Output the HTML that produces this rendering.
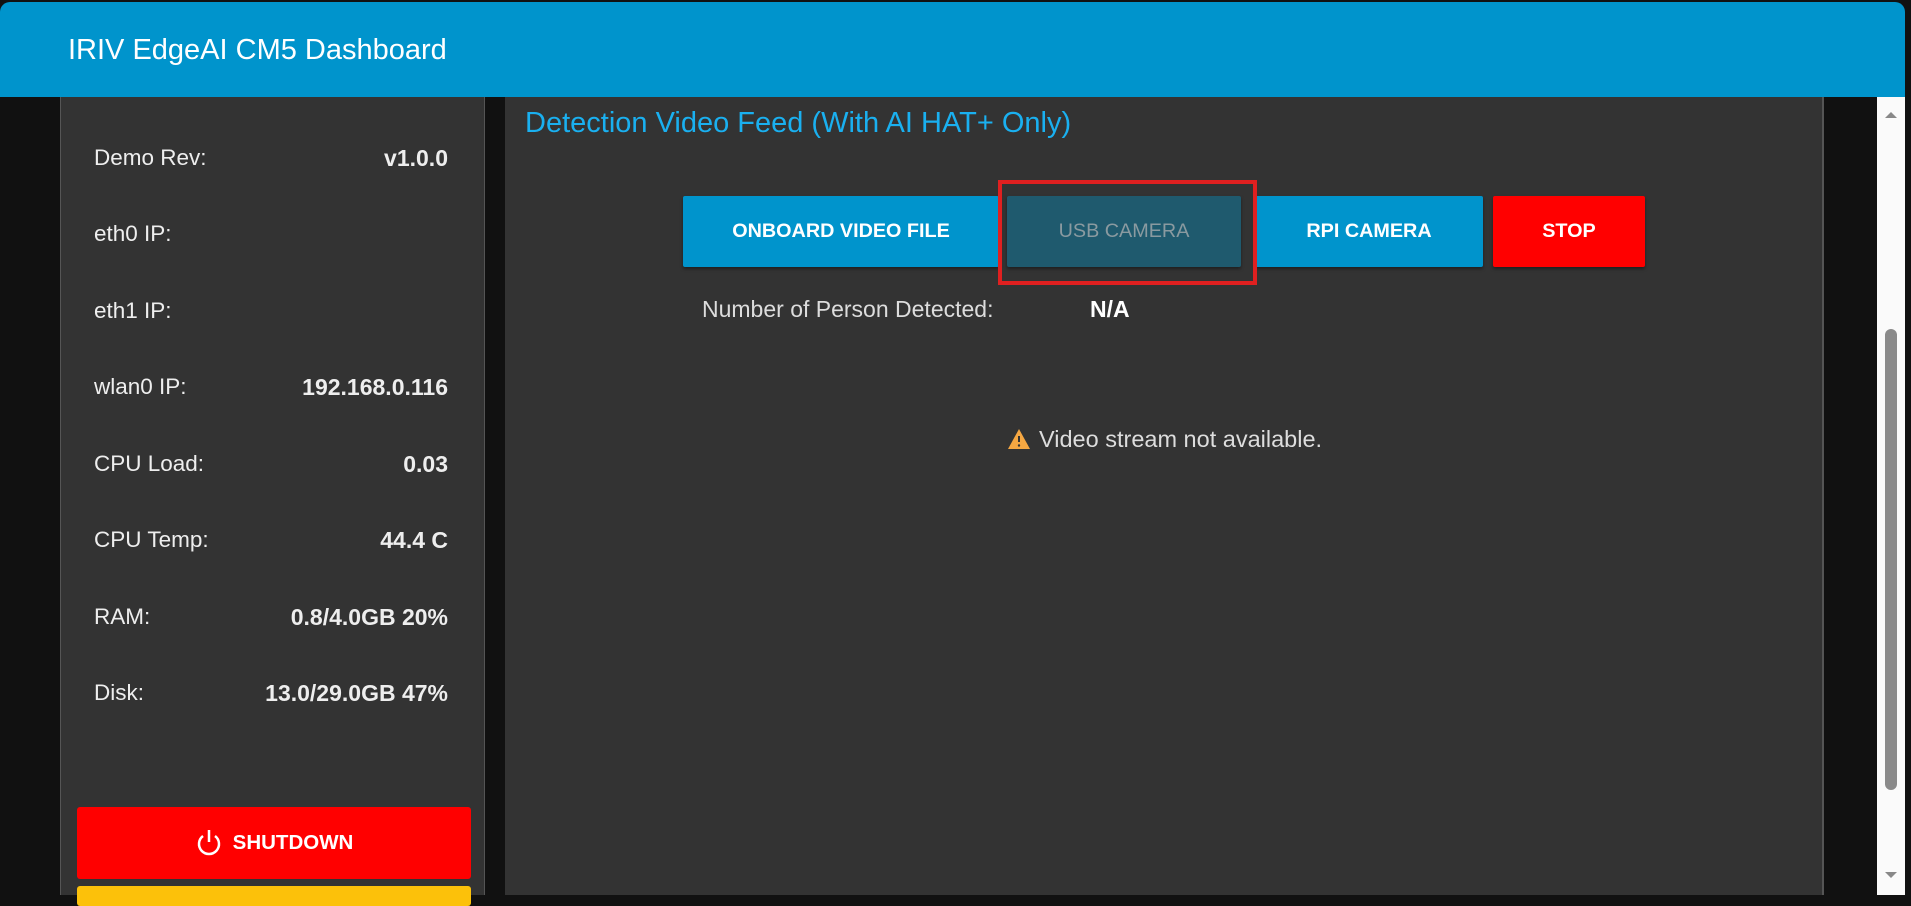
<!DOCTYPE html>
<html><head><meta charset="utf-8"><style>
*{margin:0;padding:0;box-sizing:border-box}
body{width:1911px;height:895px;overflow:hidden;background:#111;font-family:"Liberation Sans",sans-serif;position:relative;color:#eee}
.hdr{position:absolute;left:0;top:2px;width:1905px;height:95px;background:#0094cc;border-radius:10px 10px 0 0}
.hdr span{position:absolute;left:68px;top:31px;font-size:29px;line-height:34px;color:#fff}
.side{position:absolute;left:60px;top:97px;width:425px;height:798px;background:#333;border-left:1px solid #555;border-right:1px solid #555}
.row{position:absolute;left:33px;width:354px;font-size:22.5px;line-height:24px;display:flex;justify-content:space-between}
.row b{font-weight:bold;font-size:23px}
.shut{position:absolute;left:16px;top:710px;width:394px;height:72px;background:#f00;border-radius:3px;color:#fff;font-weight:bold;font-size:20.5px;display:flex;align-items:center;justify-content:center;gap:10px}
.yel{position:absolute;left:16px;top:789px;width:394px;height:20px;background:#fcc10a;border-radius:3px}
.main{position:absolute;left:505px;top:97px;width:1319px;height:798px;background:#333;border-right:2px solid #555}
.ttl{position:absolute;left:20px;top:10px;font-size:29px;line-height:32px;color:#1ab0f0}
.btn{position:absolute;top:99px;height:71px;color:#fff;font-weight:bold;font-size:19.8px;display:flex;align-items:center;justify-content:center;border-radius:2px;box-shadow:0 2px 3px rgba(0,0,0,.4)}
.sb{position:absolute;left:1877px;top:97px;width:28px;height:798px;background:#fafafa}
</style></head><body>
<div class="hdr"><span>IRIV EdgeAI CM5 Dashboard</span></div>
<div class="side">
<div class="row" style="top:49px"><span>Demo Rev:</span><b>v1.0.0</b></div>
<div class="row" style="top:125px"><span>eth0 IP:</span><b></b></div>
<div class="row" style="top:202px"><span>eth1 IP:</span><b></b></div>
<div class="row" style="top:278px"><span>wlan0 IP:</span><b>192.168.0.116</b></div>
<div class="row" style="top:355px"><span>CPU Load:</span><b>0.03</b></div>
<div class="row" style="top:431px"><span>CPU Temp:</span><b>44.4 C</b></div>
<div class="row" style="top:508px"><span>RAM:</span><b>0.8/4.0GB 20%</b></div>
<div class="row" style="top:584px"><span>Disk:</span><b>13.0/29.0GB 47%</b></div>
<div class="shut"><svg width="28" height="30" viewBox="0 0 28 30"><path d="M8 8 A10 10 0 1 0 20 8" fill="none" stroke="#fff" stroke-width="2.5"/><path d="M14 2 V14" stroke="#fff" stroke-width="2.5"/></svg>SHUTDOWN</div>
<div class="yel"></div>
</div>
<div class="main">
<div class="ttl">Detection Video Feed (With AI HAT+ Only)</div>
<div class="btn" style="left:178px;width:316px;background:#0094cc">ONBOARD VIDEO FILE</div>
<div class="btn" style="left:502px;width:234px;background:#1f5a6e;color:#8a9aa0;font-weight:normal">USB CAMERA</div>
<div class="btn" style="left:750px;width:228px;background:#0094cc">RPI CAMERA</div>
<div class="btn" style="left:988px;width:152px;background:#f00">STOP</div>
<div style="position:absolute;left:493px;top:83px;width:259px;height:105px;border:4px solid #e02020"></div>
<div style="position:absolute;left:197px;top:200px;font-size:23px;line-height:24px;color:#ddd">Number of Person Detected:</div>
<div style="position:absolute;left:585px;top:200px;font-size:23px;line-height:24px;font-weight:bold;color:#fff">N/A</div>
<div style="position:absolute;left:502px;top:329px;font-size:23.5px;line-height:26px;color:#ddd;display:flex;align-items:center;gap:8px"><svg width="24" height="22" viewBox="0 0 24 22"><path d="M12 1 L23 21 H1 Z" fill="#f5a742"/><path d="M12 8 V14" stroke="#333" stroke-width="2"/><circle cx="12" cy="17.5" r="1.2" fill="#333"/></svg>Video stream not available.</div>
</div>
<div class="sb">
<div style="position:absolute;left:8px;top:15px;border-left:6px solid transparent;border-right:6px solid transparent;border-bottom:6px solid #888"></div>
<div style="position:absolute;left:8px;top:232px;width:12px;height:461px;background:#8a8a8a;border-radius:6px"></div>
<div style="position:absolute;left:8px;top:775px;border-left:6px solid transparent;border-right:6px solid transparent;border-top:6px solid #888"></div>
</div>
</body></html>
